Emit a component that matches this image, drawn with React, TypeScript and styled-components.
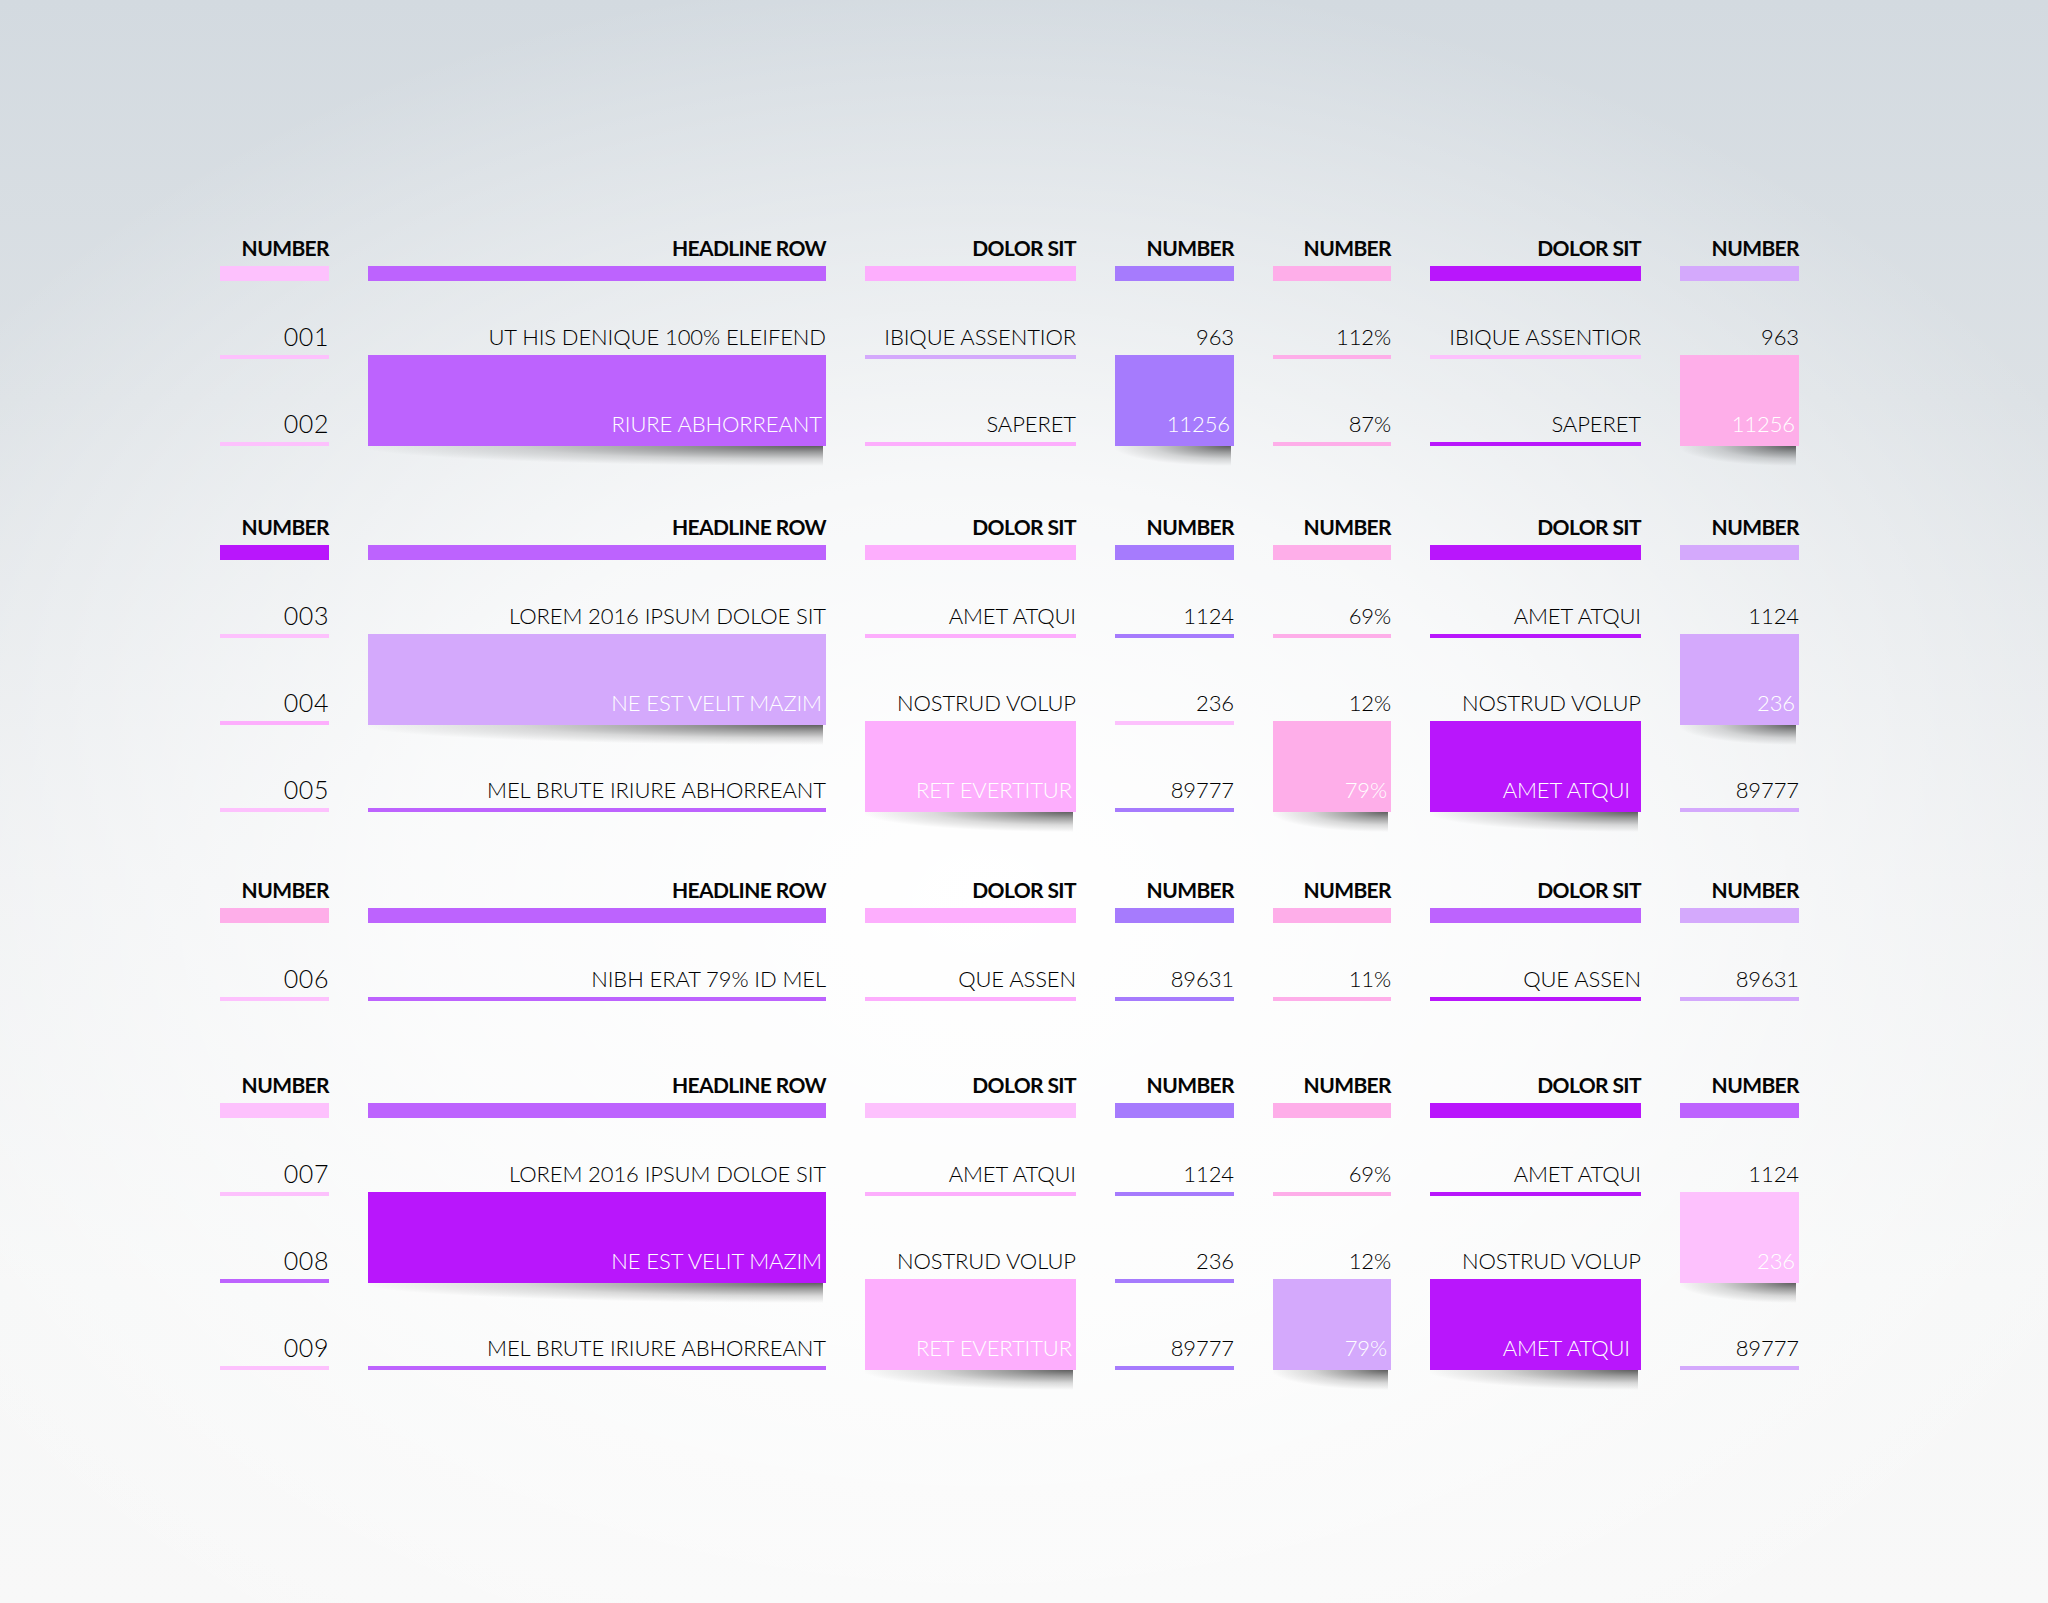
import React from 'react';
import styled, { createGlobalStyle, css } from 'styled-components';

const P = {
  a: '#fdc1fd',
  b: '#bd63fe',
  c: '#fdaefd',
  d: '#a67bfd',
  e: '#feaee9',
  f: '#b916fc',
  g: '#d4a9fc',
} as const;
type Key = keyof typeof P;

const GlobalStyle = createGlobalStyle`
  html, body { margin: 0; padding: 0; }
  body { font-family: Lato, "Open Sans", sans-serif; }
`;

const Page = styled.main`
  position: relative;
  z-index: 0;
  box-sizing: border-box;
  width: 2048px;
  height: 1603px;
  overflow: hidden;
  padding: 237px 0 0 220px;
  background:
    radial-gradient(ellipse 62% 58% at 48% 56%, rgba(255,255,255,1) 0%, rgba(255,255,255,0.75) 45%, rgba(255,255,255,0) 100%),
    linear-gradient(to bottom, #d3dae0 0%, #dce1e5 25%, #eceef0 55%, #f6f7f7 80%, #f8f8f8 100%);
`;

const Table = styled.div`
  display: flex;
  flex-direction: column;
`;

const Section = styled.section<{ $space: number }>`
  display: grid;
  grid-template-columns: 109px 458px 211px 119px 118px 211px 119px;
  grid-template-rows: auto 78px;
  grid-auto-rows: 87px;
  column-gap: 39px;
  margin-top: ${(p) => p.$space}px;
`;

const HeadCell = styled.div`
  display: flex;
  flex-direction: column;
`;

const HeadLabel = styled.span`
  font-family: Lato, "Open Sans", sans-serif;
  font-weight: 700;
  font-size: 21px;
  line-height: 22px;
  letter-spacing: -0.6px;
  color: #050505;
  text-align: right;
  white-space: nowrap;
`;

const HeadBar = styled.div<{ $c: string }>`
  height: 15px;
  margin-top: 7px;
  background: ${(p) => p.$c};
`;

const curl = css`
  &::after {
    content: '';
    position: absolute;
    top: 100%;
    left: 0;
    right: 3px;
    height: 20px;
    pointer-events: none;
    background: radial-gradient(
      ellipse 100% 100% at 98% 0%,
      rgba(0, 0, 0, 0.62) 0%,
      rgba(0, 0, 0, 0.38) 30%,
      rgba(0, 0, 0, 0.14) 65%,
      rgba(0, 0, 0, 0) 100%
    );
  }
`;

const Cell = styled.div<{ $fill?: string }>`
  position: relative;
  display: flex;
  flex-direction: column;
  justify-content: flex-end;
  background: ${(p) => p.$fill ?? 'transparent'};
  ${(p) => p.$fill && curl}
`;

const CellText = styled.span<{ $big?: boolean; $onFill?: boolean; $inset?: number }>`
  font-family: Lato, "Open Sans", sans-serif;
  font-weight: 300;
  font-size: ${(p) => (p.$big ? '25px' : '22px')};
  line-height: ${(p) => (p.$big ? '24px' : '22px')};
  letter-spacing: ${(p) => (p.$big ? '0.6px' : '-0.1px')};
  color: ${(p) => (p.$onFill ? '#ffffff' : '#000000')};
  text-align: right;
  white-space: nowrap;
  padding-right: ${(p) => (p.$onFill ? p.$inset ?? 4 : 0)}px;
`;

const Line = styled.div<{ $c: string }>`
  height: 4px;
  margin-top: 7px;
  background: ${(p) => p.$c};
`;

type C = [string, Key, boolean?];
type Block = { space: number; heads: Key[]; rows: C[][] };

const LABELS = ['NUMBER', 'HEADLINE ROW', 'DOLOR SIT', 'NUMBER', 'NUMBER', 'DOLOR SIT', 'NUMBER'];

const BLOCKS: Block[] = [
  {
    space: 0,
    heads: ['a', 'b', 'c', 'd', 'e', 'f', 'g'],
    rows: [
      [['001', 'a'], ['UT HIS DENIQUE 100% ELEIFEND', 'b'], ['IBIQUE ASSENTIOR', 'g'], ['963', 'd'], ['112%', 'e'], ['IBIQUE ASSENTIOR', 'a'], ['963', 'e']],
      [['002', 'a'], ['RIURE ABHORREANT', 'b', true], ['SAPERET', 'c'], ['11256', 'd', true], ['87%', 'e'], ['SAPERET', 'f'], ['11256', 'e', true]],
    ],
  },
  {
    space: 70,
    heads: ['f', 'b', 'c', 'd', 'e', 'f', 'g'],
    rows: [
      [['003', 'a'], ['LOREM 2016 IPSUM DOLOE SIT', 'g'], ['AMET ATQUI', 'c'], ['1124', 'd'], ['69%', 'e'], ['AMET ATQUI', 'f'], ['1124', 'g']],
      [['004', 'c'], ['NE EST VELIT MAZIM', 'g', true], ['NOSTRUD VOLUP', 'c'], ['236', 'a'], ['12%', 'e'], ['NOSTRUD VOLUP', 'f'], ['236', 'g', true]],
      [['005', 'a'], ['MEL BRUTE IRIURE ABHORREANT', 'b'], ['RET EVERTITUR', 'c', true], ['89777', 'd'], ['79%', 'e', true], ['AMET ATQUI', 'f', true], ['89777', 'g']],
    ],
  },
  {
    space: 67,
    heads: ['e', 'b', 'c', 'd', 'e', 'b', 'g'],
    rows: [
      [['006', 'a'], ['NIBH ERAT 79% ID MEL', 'b'], ['QUE ASSEN', 'c'], ['89631', 'd'], ['11%', 'e'], ['QUE ASSEN', 'f'], ['89631', 'g']],
    ],
  },
  {
    space: 73,
    heads: ['a', 'b', 'a', 'd', 'e', 'f', 'b'],
    rows: [
      [['007', 'a'], ['LOREM 2016 IPSUM DOLOE SIT', 'f'], ['AMET ATQUI', 'c'], ['1124', 'd'], ['69%', 'e'], ['AMET ATQUI', 'f'], ['1124', 'a']],
      [['008', 'b'], ['NE EST VELIT MAZIM', 'f', true], ['NOSTRUD VOLUP', 'c'], ['236', 'd'], ['12%', 'g'], ['NOSTRUD VOLUP', 'f'], ['236', 'a', true]],
      [['009', 'a'], ['MEL BRUTE IRIURE ABHORREANT', 'b'], ['RET EVERTITUR', 'c', true], ['89777', 'd'], ['79%', 'g', true], ['AMET ATQUI', 'f', true], ['89777', 'g']],
    ],
  },
];

export default function App() {
  return (
    <>
      <GlobalStyle />
      <Page>
        <Table>
          {BLOCKS.map((b, bi) => (
            <Section key={bi} $space={b.space}>
              {b.heads.map((h, i) => (
                <HeadCell key={`h${i}`}>
                  <HeadLabel>{LABELS[i]}</HeadLabel>
                  <HeadBar $c={P[h]} />
                </HeadCell>
              ))}
              {b.rows.map((row, ri) =>
                row.map(([t, k, fill], ci) => (
                  <Cell key={`${ri}-${ci}`} $fill={fill ? P[k] : undefined}>
                    <CellText $big={ci === 0} $onFill={!!fill} $inset={ci === 5 ? 11 : 4}>
                      {t}
                    </CellText>
                    <Line $c={P[k]} />
                  </Cell>
                ))
              )}
            </Section>
          ))}
        </Table>
      </Page>
    </>
  );
}
